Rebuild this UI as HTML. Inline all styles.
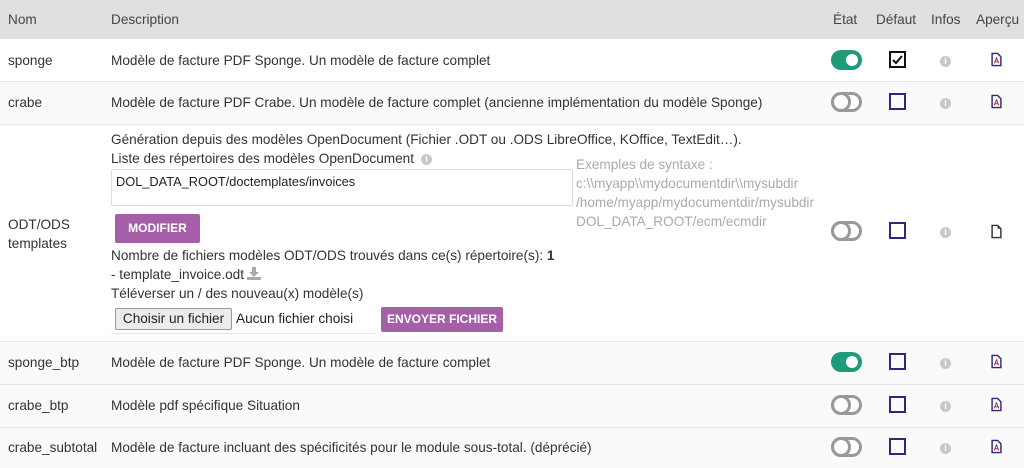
<!DOCTYPE html>
<html><head><meta charset="utf-8"><style>
body{margin:0;width:1024px;height:468px;overflow:hidden;background:#fff;font-family:"Liberation Sans",sans-serif;font-size:13.6px;color:#333;position:relative}
.a{position:absolute;white-space:nowrap}
.hd{position:absolute;left:0;top:0;width:1024px;height:39px;background:#e0e0e0}
.row{position:absolute;left:0;width:1024px;border-bottom:1px solid #e6e6e6}
.tog{position:absolute;width:31px;height:20px;border-radius:10px;box-sizing:border-box}
.on{background:#1e9b78}
.on:after{content:"";position:absolute;right:4px;top:4px;width:12px;height:12px;border-radius:50%;background:#fff}
.off{border:3px solid #999;background:#fff}
.off:after{content:"";position:absolute;left:-3px;top:-3px;width:20px;height:20px;border-radius:50%;border:3px solid #999;box-sizing:border-box}
.cb{position:absolute;width:13px;height:13px;border:2px solid #2a2a7a;box-sizing:content-box}
.inf{position:absolute;width:11px;height:11px;border-radius:50%;background:#c8c8c8;color:#fff;font-size:9px;font-weight:bold;text-align:center;line-height:11px}
.btn{position:absolute;background:#a45fa8;color:#fff;font-weight:bold;font-size:12px;border-radius:2px;text-align:center}
</style></head><body>
<div class="hd"></div>
<div class="a" style="left:8px;top:12px;color:#444">Nom</div>
<div class="a" style="left:111px;top:12px;color:#444">Description</div>
<div class="a" style="left:833px;top:12px;color:#444">État</div>
<div class="a" style="left:876px;top:12px;color:#444">Défaut</div>
<div class="a" style="left:931px;top:12px;color:#444">Infos</div>
<div class="a" style="left:976px;top:12px;color:#444">Aperçu</div>

<div class="row" style="top:39px;height:42px;background:#fff"></div>
<div class="row" style="top:82px;height:42px;background:#fafafa"></div>
<div class="row" style="top:125px;height:216px;background:#fff"></div>
<div class="row" style="top:342px;height:42px;background:#fafafa"></div>
<div class="row" style="top:385px;height:42px;background:#fafafa"></div>
<div class="row" style="top:428px;height:40px;background:#fafafa;border:0"></div>

<div class="a" style="left:8px;top:53px">sponge</div>
<div class="a" style="left:111px;top:53px">Modèle de facture PDF Sponge. Un modèle de facture complet</div>
<div class="a" style="left:8px;top:95px">crabe</div>
<div class="a" style="left:111px;top:95px">Modèle de facture PDF Crabe. Un modèle de facture complet (ancienne implémentation du modèle Sponge)</div>
<div class="a" style="left:8px;top:215px;line-height:19px">ODT/ODS<br>templates</div>
<div class="a" style="left:111px;top:132px">Génération depuis des modèles OpenDocument (Fichier .ODT ou .ODS LibreOffice, KOffice, TextEdit…).</div>
<div class="a" style="left:111px;top:151px">Liste des répertoires des modèles OpenDocument</div>
<div class="inf" style="left:421px;top:154px">i</div>
<div class="a" style="left:111px;top:169px;width:462px;height:37px;border:1px solid #ddd;border-radius:2px;box-sizing:border-box;padding:4px 4px;font-size:12.8px;color:#222">DOL_DATA_ROOT/doctemplates/invoices</div>
<div class="btn" style="left:115px;top:214px;width:85px;height:29px;line-height:29px">MODIFIER</div>
<div class="a" style="left:576px;top:155px;color:#aaa;line-height:19px">Exemples de syntaxe :<br>c:\\myapp\\mydocumentdir\\mysubdir<br>/home/myapp/mydocumentdir/mysubdir<br>DOL_DATA_ROOT/ecm/ecmdir</div>
<div class="a" style="left:111px;top:248px">Nombre de fichiers modèles ODT/ODS trouvés dans ce(s) répertoire(s): <b>1</b></div>
<div class="a" style="left:111px;top:267px">- template_invoice.odt</div>
<svg class="a" style="left:247px;top:267px" width="14" height="13" viewBox="0 0 14 13"><path d="M5 0h4v5h3l-5 5-5-5h3z" fill="#aaa"/><rect x="0" y="10" width="14" height="3" fill="#aaa"/></svg>
<div class="a" style="left:111px;top:286px">Téléverser un / des nouveau(x) modèle(s)</div>
<div class="a" style="left:115px;top:308px;width:117px;height:22px;border:1px solid #999;border-radius:2px;background:#ececec;box-sizing:border-box;text-align:center;line-height:20px;color:#222">Choisir un fichier</div>
<div class="a" style="left:236px;top:311px;color:#222">Aucun fichier choisi</div>
<div class="a" style="left:111px;top:333px;width:265px;border-bottom:1px solid #e4e4e4"></div>
<div class="btn" style="left:381px;top:307px;width:122px;height:25px;line-height:25px">ENVOYER FICHIER</div>

<div class="a" style="left:8px;top:355px">sponge_btp</div>
<div class="a" style="left:111px;top:355px">Modèle de facture PDF Sponge. Un modèle de facture complet</div>
<div class="a" style="left:8px;top:398px">crabe_btp</div>
<div class="a" style="left:111px;top:398px">Modèle pdf spécifique Situation</div>
<div class="a" style="left:8px;top:440px">crabe_subtotal</div>
<div class="a" style="left:111px;top:440px">Modèle de facture incluant des spécificités pour le module sous-total. (déprécié)</div>

<div class="tog on" style="left:831px;top:50px"></div>
<div class="tog off" style="left:831px;top:92px"></div>
<div class="tog off" style="left:831px;top:221px"></div>
<div class="tog on" style="left:831px;top:352px"></div>
<div class="tog off" style="left:831px;top:395px"></div>
<div class="tog off" style="left:831px;top:437px"></div>

<div class="cb" style="left:889px;top:51px;border-color:#111"></div>
<svg class="a" style="left:891px;top:53px" width="13" height="13"><path d="M2 7l3 3 6-7" stroke="#111" stroke-width="2" fill="none"/></svg>
<div class="cb" style="left:889px;top:93px"></div>
<div class="cb" style="left:889px;top:222px"></div>
<div class="cb" style="left:889px;top:353px"></div>
<div class="cb" style="left:889px;top:396px"></div>
<div class="cb" style="left:889px;top:438px"></div>

<div class="inf" style="left:940px;top:56px">i</div>
<div class="inf" style="left:940px;top:98px">i</div>
<div class="inf" style="left:940px;top:227px">i</div>
<div class="inf" style="left:940px;top:358px">i</div>
<div class="inf" style="left:940px;top:401px">i</div>
<div class="inf" style="left:940px;top:443px">i</div>

<svg class="a" style="left:991px;top:52px" width="11" height="15" viewBox="0 0 10 13"><path d="M1 1h5l3 3v8H1z" fill="none" stroke="#2a2a7a" stroke-width="1.3"/><path d="M3 10l2-5 2 5M3.5 8.5h3" stroke="#a33" stroke-width="0.9" fill="none"/></svg>
<svg class="a" style="left:991px;top:94px" width="11" height="15" viewBox="0 0 10 13"><path d="M1 1h5l3 3v8H1z" fill="none" stroke="#2a2a7a" stroke-width="1.3"/><path d="M3 10l2-5 2 5M3.5 8.5h3" stroke="#a33" stroke-width="0.9" fill="none"/></svg>
<svg class="a" style="left:991px;top:224px" width="11" height="15" viewBox="0 0 10 13"><path d="M1 1h5l3 3v8H1z" fill="none" stroke="#333" stroke-width="1.3"/><path d="M6 1v3h3" fill="#333"/></svg>
<svg class="a" style="left:991px;top:354px" width="11" height="15" viewBox="0 0 10 13"><path d="M1 1h5l3 3v8H1z" fill="none" stroke="#2a2a7a" stroke-width="1.3"/><path d="M3 10l2-5 2 5M3.5 8.5h3" stroke="#a33" stroke-width="0.9" fill="none"/></svg>
<svg class="a" style="left:991px;top:397px" width="11" height="15" viewBox="0 0 10 13"><path d="M1 1h5l3 3v8H1z" fill="none" stroke="#2a2a7a" stroke-width="1.3"/><path d="M3 10l2-5 2 5M3.5 8.5h3" stroke="#a33" stroke-width="0.9" fill="none"/></svg>
<svg class="a" style="left:991px;top:439px" width="11" height="15" viewBox="0 0 10 13"><path d="M1 1h5l3 3v8H1z" fill="none" stroke="#2a2a7a" stroke-width="1.3"/><path d="M3 10l2-5 2 5M3.5 8.5h3" stroke="#a33" stroke-width="0.9" fill="none"/></svg>
</body></html>
